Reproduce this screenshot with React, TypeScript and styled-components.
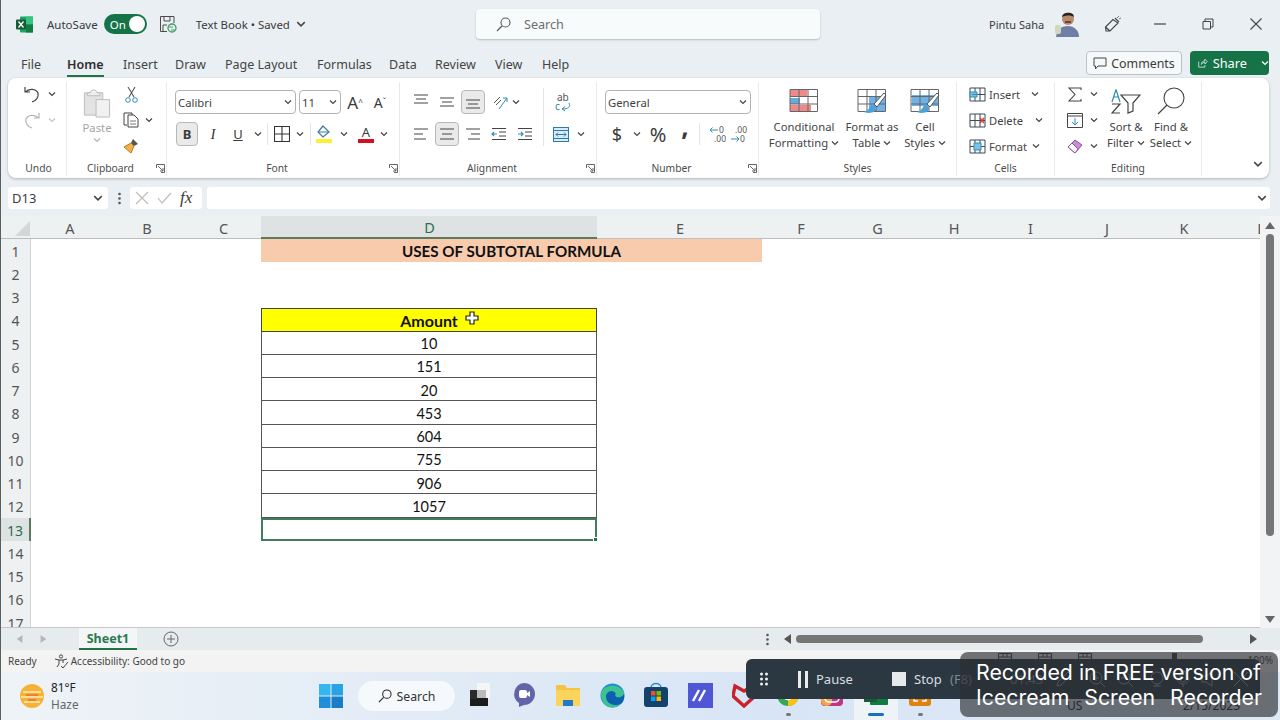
import React, { Fragment } from 'react'
import styled, { createGlobalStyle } from 'styled-components'

const UI = '"Noto Sans", "Open Sans", sans-serif'
const GREEN = '#217346'

const GlobalStyle = createGlobalStyle`
  html, body { margin: 0; padding: 0; background: #e9eff2; }
  body { font-family: ${UI}; color: #3b3b3b; }
  #root { width: 1280px; height: 720px; overflow: hidden; }
`

const Page = styled.div`
  position: relative;
  width: 1280px;
  height: 720px;
  overflow: hidden;
  display: flex;
  flex-direction: column;
  background: #e9eff2;
  border-left: 1px solid #5a5f62;
  box-sizing: border-box;
`

/* title bar */
const TitleBar = styled.header`
  height: 48px;
  flex: none;
  display: flex;
  align-items: center;
`
const TitleLeft = styled.div`
  width: 475px;
  flex: none;
  display: flex;
  align-items: center;
  padding-left: 15px;
  box-sizing: border-box;
`
const TitleText = styled.span<{ $ml?: number; $fs?: number }>`
  font-size: ${({ $fs }) => $fs ?? 11.5}px;
  color: #3a3a3a;
  margin-left: ${({ $ml }) => $ml ?? 0}px;
  white-space: nowrap;
`
const Toggle = styled.div`
  width: 43px;
  height: 20px;
  margin-left: 6px;
  border-radius: 10px;
  background: #157347;
  color: #fff;
  font-size: 11.5px;
  display: flex;
  align-items: center;
  justify-content: space-between;
  padding: 0 2px 0 6px;
  box-sizing: border-box;
`
const ToggleKnob = styled.i`
  width: 16px;
  height: 16px;
  border-radius: 50%;
  background: #fff;
`
const SearchBox = styled.div`
  width: 344px;
  height: 30px;
  flex: none;
  display: flex;
  align-items: center;
  gap: 13px;
  padding-left: 20px;
  box-sizing: border-box;
  background: #f8fbfc;
  border-radius: 4px;
  box-shadow: 0 1px 2px rgba(0, 0, 0, 0.22);
  font-size: 12.6px;
  color: #6d6d6d;
`
const TitleRight = styled.div`
  flex: 1;
  display: flex;
  align-items: center;
  padding-left: 169px;
`
const WinBtn = styled.div<{ $w: number }>`
  width: ${({ $w }) => $w}px;
  flex: none;
  display: flex;
  justify-content: center;
  align-items: center;
`

/* menu row */
const MenuRow = styled.nav`
  height: 30px;
  flex: none;
  display: flex;
  align-items: center;
  padding-left: 20px;
`
const Tab = styled.span<{ $active?: boolean; $w: number }>`
  position: relative;
  width: ${({ $w }) => $w}px;
  flex: none;
  padding-top: 2px;
  font-size: 12.5px;
  white-space: nowrap;
  color: ${({ $active }) => ($active ? '#2e2e2e' : '#444')};
  font-weight: ${({ $active }) => ($active ? 600 : 400)};
  &::after {
    content: '';
    display: ${({ $active }) => ($active ? 'block' : 'none')};
    position: absolute;
    left: 0;
    top: 21px;
    width: 37px;
    height: 2px;
    background: ${GREEN};
  }
`
const MenuRight = styled.div`
  margin-left: auto;
  display: flex;
  gap: 8px;
  padding-right: 11px;
`
const CommentsBtn = styled.div`
  width: 96px;
  height: 24px;
  display: flex;
  align-items: center;
  justify-content: center;
  gap: 4px;
  box-sizing: border-box;
  background: #f6f9fa;
  border: 1px solid #bcc2c5;
  border-radius: 4px;
  font-size: 12.4px;
`
const ShareBtn = styled.div`
  width: 79px;
  height: 24px;
  display: flex;
  align-items: center;
  gap: 5px;
  padding-left: 8px;
  box-sizing: border-box;
  background: #157347;
  border-radius: 4px;
  color: #fff;
  font-size: 12.8px;
`

/* ribbon */
const Ribbon = styled.section`
  height: 100px;
  flex: none;
  margin: 0 11px 0 7px;
  display: flex;
  background: #fff;
  border-radius: 8px;
  box-shadow: 0 1px 3px rgba(0, 0, 0, 0.25);
`
const Group = styled.div<{ $w: number }>`
  width: ${({ $w }) => $w}px;
  flex: none;
  margin: 4px 0 2px;
  display: flex;
  flex-direction: column;
  box-sizing: border-box;
  border-right: 1px solid #e7e9ea;
`
const GroupBody = styled.div<{ $pl?: number }>`
  flex: 1;
  display: flex;
  padding-left: ${({ $pl }) => $pl ?? 8}px;
  min-height: 0;
`
const GroupFoot = styled.div<{ $pl?: number }>`
  height: 16px;
  flex: none;
  display: flex;
  align-items: center;
  padding-left: ${({ $pl }) => $pl ?? 0}px;
`
const GroupLabel = styled.span`
  flex: 1;
  text-align: center;
  font-size: 10.3px;
  color: #4c4c4c;
`
const Launcher = styled.span`
  width: 12px;
  display: flex;
  justify-content: center;
`
const Stack = styled.div<{ $pt?: number; $gap?: number; $w?: number }>`
  display: flex;
  flex-direction: column;
  flex: none;
  padding-top: ${({ $pt }) => $pt ?? 0}px;
  gap: ${({ $gap }) => $gap ?? 2}px;
  ${({ $w }) => ($w ? `width: ${$w}px;` : '')}
`
const Row = styled.div`
  height: 24px;
  flex: none;
  display: flex;
  align-items: center;
`
const Btn = styled.div<{ $w: number; $active?: boolean }>`
  width: ${({ $w, $active }) => ($active ? $w - 2 : $w)}px;
  margin: 0 ${({ $active }) => ($active ? 1 : 0)}px;
  height: 24px;
  flex: none;
  display: flex;
  align-items: center;
  justify-content: center;
  box-sizing: border-box;
  border-radius: 4px;
  font-size: 13px;
  background: ${({ $active }) => ($active ? '#eaeaea' : 'transparent')};
  border: ${({ $active }) => ($active ? '1px solid #b8b8b8' : 'none')};
`
const GlyphBtn = styled(Btn)<{ $fs: number; $bold?: boolean; $pb?: number }>`
  font-size: ${({ $fs }) => $fs}px;
  font-weight: ${({ $bold }) => ($bold ? 700 : 400)};
  padding-bottom: ${({ $pb }) => $pb ?? 0}px;
`
const ItalicBtn = styled(Btn)`
  font-family: 'Liberation Serif', serif;
  font-style: italic;
  font-size: 15px;
`
const UnderBtn = styled(Btn)`
  text-decoration: underline;
`
const GrowFont = styled.sup`
  font-size: 8px;
  line-height: 8px;
`
const FontColorBtn = styled(Btn)`
  flex-direction: column;
  line-height: 13px;
`
const ColorBar = styled.i`
  display: block;
  width: 16px;
  height: 4px;
  background: #d3111c;
`
const VSep = styled.i<{ $ml?: number; $mr?: number; $h?: number; $mt?: number }>`
  width: 1px;
  height: ${({ $h }) => $h ?? 22}px;
  flex: none;
  margin: ${({ $mt }) => $mt ?? 0}px ${({ $mr }) => $mr ?? 0}px 0 ${({ $ml }) => $ml ?? 0}px;
  background: #e3e5e6;
`
const Select = styled.div<{ $w: number; $mr?: number }>`
  width: ${({ $w }) => $w}px;
  height: 24px;
  flex: none;
  margin-right: ${({ $mr }) => $mr ?? 0}px;
  display: flex;
  align-items: center;
  justify-content: space-between;
  padding: 0 3px 0 2px;
  box-sizing: border-box;
  background: #fff;
  border: 1px solid #b3b3b3;
  border-radius: 4px;
  font-size: 11.3px;
  color: #3f3f3f;
`
const BigBtn = styled.div<{ $w: number }>`
  width: ${({ $w }) => $w}px;
  flex: none;
  padding-top: 6px;
  display: flex;
  flex-direction: column;
  align-items: center;
`
const BigIcon = styled.div<{ $h?: number; $mb?: number }>`
  height: ${({ $h }) => $h ?? 26}px;
  margin-bottom: ${({ $mb }) => $mb ?? 5}px;
  display: flex;
  align-items: center;
  justify-content: center;
`
const BigLine = styled.span<{ $muted?: boolean }>`
  height: 16px;
  line-height: 16px;
  font-size: 11.3px;
  white-space: nowrap;
  color: ${({ $muted }) => ($muted ? '#a5a5a5' : '#444')};
  display: flex;
  align-items: center;
  gap: 3px;
`
const CellAction = styled.div`
  height: 24px;
  display: flex;
  align-items: center;
  font-size: 11.2px;
  color: #444;
  white-space: nowrap;
`
const ActionLabel = styled.span<{ $w: number }>`
  width: ${({ $w }) => $w}px;
  margin-left: 3px;
`
const Collapse = styled.div`
  flex: 1;
  display: flex;
  align-items: flex-end;
  justify-content: flex-end;
  padding: 0 6px 9px 0;
`

/* formula bar */
const FormulaBar = styled.div`
  height: 22px;
  flex: none;
  margin: 9px 10px 0 7px;
  display: flex;
  align-items: center;
`
const NameBox = styled.div`
  width: 100px;
  height: 22px;
  flex: none;
  display: flex;
  align-items: center;
  justify-content: space-between;
  padding: 0 5px 0 4px;
  box-sizing: border-box;
  background: #fff;
  border-radius: 3px;
  font-size: 13px;
`
const BarDots = styled.div`
  width: 22px;
  display: flex;
  justify-content: center;
`
const FxBox = styled.div`
  width: 72px;
  height: 22px;
  flex: none;
  display: flex;
  align-items: center;
  gap: 8px;
  padding-left: 5px;
  box-sizing: border-box;
  background: #fff;
  border-radius: 3px;
`
const FxText = styled.span`
  font-family: 'Liberation Serif', serif;
  font-style: italic;
  font-size: 17px;
  color: #3a3a3a;
`
const FormulaInput = styled.div`
  flex: 1;
  height: 22px;
  margin-left: 5px;
  display: flex;
  align-items: center;
  justify-content: flex-end;
  padding-right: 3px;
  background: #fff;
  border-radius: 3px;
`

/* sheet */
const Main = styled.main`
  height: 412px;
  margin-top: 7px;
  flex: none;
  display: flex;
`
const GridPane = styled.div`
  width: 1259px;
  flex: none;
  overflow: hidden;
  background: #fff;
  border-bottom: 1px solid #c6c6c6;
  box-sizing: border-box;
`
const SheetGrid = styled.div`
  display: grid;
  grid-template-columns: 30px 77px 77px 76px 336px 165px 77px 76px 77px 76px 77px 77px 77px;
  grid-template-rows: 22.5px repeat(17, 23.25px);
`
const Corner = styled.div`
  background: #eef1f2;
  border-bottom: 1px solid #bdbdbd;
  display: flex;
  align-items: flex-end;
  justify-content: flex-end;
  padding: 0 1px 2px 0;
  box-sizing: border-box;
`
const ColHead = styled.div<{ $selected?: boolean }>`
  display: flex;
  align-items: center;
  justify-content: center;
  padding: 2px 0 0 1px;
  font-size: 14.5px;
  box-sizing: border-box;
  color: ${({ $selected }) => ($selected ? '#2c6e4c' : '#555')};
  background: ${({ $selected }) => ($selected ? '#dfe2e2' : '#eef1f2')};
  border-bottom: ${({ $selected }) => ($selected ? `2px solid #5d7a5f` : '1px solid #bdbdbd')};
`
const RowHead = styled.div<{ $selected?: boolean }>`
  display: flex;
  align-items: center;
  justify-content: center;
  padding-top: 2px;
  font-size: 14px;
  box-sizing: border-box;
  color: ${({ $selected }) => ($selected ? '#2c6e4c' : '#555')};
  background: ${({ $selected }) => ($selected ? '#dfe2e2' : '#eef1f2')};
  border-right: ${({ $selected }) => ($selected ? `2px solid #5d7a5f` : '1px solid #d0d3d4')};
`
const Blank = styled.div``
const SheetCell = styled.div<{ $kind: 'title' | 'head' | 'value' | 'active' }>`
  position: relative;
  display: flex;
  align-items: center;
  justify-content: center;
  padding-top: 2px;
  box-sizing: border-box;
  font-family: Lato, 'Liberation Sans', sans-serif;
  font-size: ${({ $kind }) => ($kind === 'title' ? 15.2 : $kind === 'head' ? 16 : 14.5)}px;
  color: #111;
  font-weight: ${({ $kind }) => ($kind === 'title' || $kind === 'head' ? 700 : 400)};
  grid-column: ${({ $kind }) => ($kind === 'title' ? 'span 2' : 'auto')};
  background: ${({ $kind }) =>
    $kind === 'title' ? '#f8cbad' : $kind === 'head' ? '#ffff00' : '#fff'};
  ${({ $kind }) => ($kind === 'head' ? 'border: 1px solid #444;' : '')}
  ${({ $kind }) =>
    $kind === 'value' ? 'border: 1px solid #555; border-top: none;' : ''}
  ${({ $kind }) => ($kind === 'active' ? `border: 2px solid #3f7d5e;` : '')}
  ${({ $kind }) =>
    $kind === 'active'
      ? `&::after { content: ''; position: absolute; right: -3px; bottom: -3px; width: 5px; height: 5px; background: #217346; border: 1px solid #fff; box-sizing: border-box; }`
      : ''}
`
const Cursor = styled.svg`
  position: absolute;
  left: calc(50% + 35px);
  top: 1px;
`
const VScroll = styled.div`
  flex: 1;
  display: flex;
  flex-direction: column;
  align-items: center;
  padding: 5px 0 4px;
  box-sizing: border-box;
  background: #f1f3f4;
`
const VThumb = styled.div`
  width: 8px;
  height: 302px;
  margin-top: 3px;
  border-radius: 4px;
  background: #767676;
`
const VGap = styled.span`
  flex: 1;
`

/* sheet tabs */
const SheetBar = styled.div`
  height: 22px;
  flex: none;
  display: flex;
  align-items: center;
  background: #e6ebed;
`
const SheetNav = styled.div`
  width: 78px;
  display: flex;
  gap: 15px;
  padding-left: 15px;
  box-sizing: border-box;
`
const SheetTab = styled.div`
  width: 58px;
  height: 22px;
  display: flex;
  align-items: center;
  justify-content: center;
  box-sizing: border-box;
  background: #f3f5f6;
  border-bottom: 2px solid ${GREEN};
  font-size: 12.5px;
  font-weight: 700;
  color: #2b7a50;
`
const AddSheet = styled.div`
  width: 68px;
  display: flex;
  justify-content: center;
`
const HScrollArea = styled.div`
  margin-left: auto;
  width: 514px;
  display: flex;
  align-items: center;
  gap: 0;
  padding-right: 22px;
  box-sizing: border-box;
`
const HGap = styled.span`
  width: 14px;
`
const HTrack = styled.div`
  flex: 1;
  height: 8px;
  margin: 0 8px 0 3px;
  display: flex;
`
const HThumb = styled.div`
  width: 407px;
  border-radius: 4px;
  background: #767676;
`

/* status bar */
const StatusBar = styled.div`
  height: 22px;
  flex: none;
  display: flex;
  align-items: center;
  padding-left: 7px;
  background: #f3f3f3;
  font-size: 10px;
  color: #444;
`
const StatusA11y = styled.span`
  margin-left: 17px;
  display: flex;
  align-items: center;
  gap: 2px;
`
const StatusViews = styled.div`
  margin-left: auto;
  display: flex;
  align-items: flex-start;
  height: 22px;
  gap: 26px;
  padding: 3px 7px 0 0;
  box-sizing: border-box;
`
const ZoomSlider = styled.span`
  width: 104px;
  padding-left: 54px;
  box-sizing: border-box;
`
const SliderKnob = styled.i`
  display: block;
  width: 5px;
  height: 9px;
  background: #444;
`

/* taskbar */
const Taskbar = styled.footer`
  flex: 1;
  display: flex;
  align-items: center;
  background: linear-gradient(90deg, #eef3f7 0%, #e3ecf6 30%, #d8e5f6 60%, #dfe9f3 100%);
`
const Weather = styled.div`
  width: 318px;
  flex: none;
  display: flex;
  align-items: center;
  gap: 7px;
  padding-left: 19px;
  box-sizing: border-box;
`
const WeatherText = styled.div`
  display: flex;
  flex-direction: column;
  font-size: 11.8px;
  line-height: 17px;
  color: #222;
  span:last-child { color: #666; }
`
const StartIcon = styled.div`
  width: 24px;
  height: 24px;
  flex: none;
  margin-right: 15px;
`
const TaskSearch = styled.div`
  width: 97px;
  height: 30px;
  flex: none;
  margin-right: 3px;
  display: flex;
  align-items: center;
  justify-content: center;
  gap: 5px;
  background: #f6f9fc;
  border-radius: 15px;
  font-size: 12.3px;
  color: #333;
`
const TaskSlot = styled.div<{ $state?: 'open' | 'active' }>`
  position: relative;
  width: 44px;
  height: 48px;
  flex: none;
  display: flex;
  align-items: center;
  justify-content: center;
  box-sizing: border-box;
  padding-bottom: 2px;
  background: ${({ $state }) => ($state === 'active' ? '#eef3f8' : 'transparent')};
  &::after {
    content: '';
    display: ${({ $state }) => ($state ? 'block' : 'none')};
    position: absolute;
    bottom: 4px;
    left: 50%;
    width: ${({ $state }) => ($state === 'active' ? 16 : 5)}px;
    height: 3px;
    margin-left: ${({ $state }) => ($state === 'active' ? -8 : -2.5)}px;
    border-radius: 2px;
    background: ${({ $state }) => ($state === 'active' ? '#1a6fc4' : '#777')};
  }
`
const Tray = styled.div`
  margin-left: auto;
  width: 213px;
  display: flex;
  justify-content: space-between;
  align-items: flex-end;
  height: 48px;
  padding: 0 40px 6px 0;
  box-sizing: border-box;
  font-size: 12px;
  color: #222;
`

/* recorder overlays */
const RecorderBar = styled.div`
  position: absolute;
  left: 745px;
  top: 659px;
  width: 514px;
  height: 40px;
  display: flex;
  align-items: center;
  padding-left: 14px;
  box-sizing: border-box;
  border-radius: 6px;
  background: #2b3842;
  color: #d9dee2;
  font-size: 13px;
`
const RecorderItem = styled.span<{ $w: number; $dim?: boolean }>`
  width: ${({ $w }) => $w}px;
  flex: none;
  display: flex;
  align-items: center;
  gap: 8px;
  white-space: nowrap;
  color: ${({ $dim }) => ($dim ? '#7e8b94' : '#d9dee2')};
`
const Watermark = styled.div`
  position: absolute;
  left: 959px;
  top: 652px;
  width: 318px;
  height: 65px;
  padding: 8px 16px 0 16px;
  box-sizing: border-box;
  border-radius: 8px;
  background: rgba(42, 46, 50, 0.66);
  color: #fff;
  font-family: Inter, 'Noto Sans', sans-serif;
  font-size: 21.3px;
  line-height: 25px;
  white-space: nowrap;
`
const WatermarkLine = styled.div`
  display: flex;
  justify-content: space-between;
`

/* icons */
const Chev = ({ s = 8, c = '#444' }: { s?: number; c?: string }) => (
  <svg width={s} height={s} viewBox="0 0 8 8" style={{ flex: 'none' }}>
    <path d="M1 2.5 4 5.5 7 2.5" fill="none" stroke={c} strokeWidth="1.2" />
  </svg>
)
const LauncherIcon = () => (
  <svg width="9" height="9" viewBox="0 0 9 9">
    <path d="M.5 4V.5H8.5V8.5H5M2 2 7 7M4 7H7V4" fill="none" stroke="#666" />
  </svg>
)
const Lines = ({ a, b, c }: { a: number[]; b: number[]; c: number[] }) => (
  <svg width="16" height="14" viewBox="0 0 16 14">
    <path
      d={`M${a[0]} 2H${a[1]}M${b[0]} 7H${b[1]}M${c[0]} 12H${c[1]}`}
      stroke="#444"
      strokeWidth="1.1"
    />
  </svg>
)
const VAlign = ({ y }: { y: number }) => (
  <svg width="16" height="16" viewBox="0 0 16 16">
    <path d={`M1 ${y}H15M3 ${y + 4}H13M1 ${y + 8}H15`} stroke="#444" strokeWidth="1.1" />
  </svg>
)
const Indent = ({ flip }: { flip?: boolean }) => (
  <svg width="16" height="14" viewBox="0 0 16 14">
    <path d="M1 1.5H15M8 5H15M8 9H15M1 12.5H15" stroke="#444" strokeWidth="1.1" />
    <path
      d={flip ? 'M1 7H6M4 5 6 7 4 9' : 'M6 7H1M3 5 1 7 3 9'}
      stroke="#2f8fb0"
      strokeWidth="1.1"
      fill="none"
    />
  </svg>
)
const GridIcon = ({ kind }: { kind: 'cond' | 'table' | 'style' }) => (
  <svg width="30" height="26" viewBox="0 0 30 26">
    {kind === 'cond' && (
      <>
        <rect x="1" y="2" width="17" height="7" fill="#f08a8a" />
        <rect x="1" y="10" width="10" height="6" fill="#6aa9dc" />
        <rect x="1" y="17" width="21" height="6" fill="#f08a8a" />
      </>
    )}
    {kind === 'table' && <path d="M12 9H28V23H12Z" fill="#6fb2ea" />}
    {kind === 'style' && <path d="M2 7H28V18H2Z" fill="#6fb2ea" />}
    <path
      d="M1 1.5H28.5V23.5H1ZM1 8.5H28.5M1 16H28.5M10 1.5V23.5M19 1.5V23.5"
      fill="none"
      stroke="#666"
      strokeWidth="1"
    />
    {kind !== 'cond' && (
      <>
        <path d="M27 5 29 7 20 19 17 16Z" fill="#fff" stroke="#555" />
        <path d="M16 16C12 17 14 22 7 24 12 26 20 25 19 19Z" fill="#4da3d9" />
      </>
    )}
  </svg>
)
const CellIcon = ({ kind }: { kind: 'insert' | 'delete' | 'format' }) => (
  <svg width="17" height="17" viewBox="0 0 17 17">
    <path d="M1 2H16V15H1ZM6 2V15M11 2V15M1 8.5H16" fill="none" stroke="#3b4a55" />
    {kind === 'insert' && <path d="M1 6H8V11H1Z M9 8.5H3" fill="#7fc0ea" stroke="#2f8fb0" />}
    {kind === 'delete' && <path d="M11 6 15 11M15 6 11 11" stroke="#d9423a" strokeWidth="1.5" />}
    {kind === 'format' && <path d="M5 5H12V12H5Z" fill="#7fc0ea" stroke="#2f8fb0" />}
  </svg>
)
const ExcelLogo = () => (
  <svg width="17" height="17" viewBox="0 0 17 17">
    <rect x="4" y="0.5" width="13" height="16" rx="1" fill="#21a366" />
    <rect x="10" y="0.5" width="7" height="8" fill="#33c481" />
    <rect x="10" y="8.5" width="7" height="8" fill="#107c41" />
    <rect x="0" y="3.5" width="10" height="10" rx="1" fill="#185c37" />
    <path d="M2.5 5.5 7.5 11.5M7.5 5.5 2.5 11.5" stroke="#fff" strokeWidth="1.3" />
  </svg>
)
const SaveIcon = () => (
  <svg width="18" height="18" viewBox="0 0 18 18">
    <path d="M1.5 1.5H15V8M8 16.5H1.5V1.5M5 1.5V6H11V1.5M4 16V10H8" fill="none" stroke="#4a4a4a" />
    <circle cx="13" cy="13" r="4" fill="none" stroke="#3f9a63" strokeWidth="1.3" />
    <path d="M10 12H14M12 15H16" stroke="#3f9a63" />
  </svg>
)
const SearchIcon = ({ s = 15, c = '#5a5a5a' }: { s?: number; c?: string }) => (
  <svg width={s} height={s} viewBox="0 0 15 15">
    <circle cx="9.5" cy="5.5" r="4.5" fill="none" stroke={c} strokeWidth="1.1" />
    <path d="M6 9 1 14" stroke={c} strokeWidth="1.2" />
  </svg>
)
const Avatar = () => (
  <svg width="26" height="28" viewBox="0 0 26 28">
    <path d="M2 27C3 19 8 16 14 16S25 20 25 27Z" fill="#6f7ea6" />
    <circle cx="14" cy="9" r="6" fill="#b98a6c" />
    <path d="M8 7C8 2 20 1 20 7 17 5 12 5 8 7Z" fill="#2b2320" />
    <path d="M11 12H17" stroke="#3c2c26" strokeWidth="1.4" />
    <rect x="1" y="15" width="6" height="9" rx="2" fill="#cfd8b8" />
  </svg>
)
const PenIcon = () => (
  <svg width="18" height="18" viewBox="0 0 18 18">
    <path
      d="M2 16 1.5 12 9 4.5 14 8 6 16ZM1.5 12 6 16M11 3 15 7"
      fill="none"
      stroke="#444"
      strokeWidth="1.1"
    />
    <path d="M13 3 15 1M15 4 17 3" stroke="#777" />
  </svg>
)
const Fill = () => (
  <svg width="18" height="20" viewBox="0 0 18 20">
    <path d="M8 2 14 8 8 13 3 8Z" fill="none" stroke="#3a7a9e" strokeWidth="1.2" />
    <path d="M3 8H13" stroke="#3a7a9e" />
    <rect x="1" y="15" width="16" height="4" fill="#ffee33" />
  </svg>
)
const WrapText = () => (
  <svg width="18" height="19" viewBox="0 0 18 19">
    <text x="3" y="8" fontSize="10" fontFamily="Noto Sans" fill="#555">ab</text>
    <text x="1" y="17" fontSize="10" fontFamily="Noto Sans" fill="#2f7ba5">c</text>
    <path d="M15 10C17 14 14 16 8 16M11 13.5 8 16 11 18" fill="none" stroke="#2f8fb0" />
  </svg>
)
const DecimalIcon = ({ more }: { more?: boolean }) => (
  <svg width="20" height="19" viewBox="0 0 20 19" fontFamily="Noto Sans" fontSize="8.5" fill="#555">
    {more ? (
      <>
        <path d="M9 5H1M3.5 2.5 1 5 3.5 7.5" fill="none" stroke="#2f8fb0" />
        <text x="10" y="8">0</text>
        <text x="5" y="17">.00</text>
      </>
    ) : (
      <>
        <text x="5" y="8">.00</text>
        <path d="M1 14H9M6.5 11.5 9 14 6.5 16.5" fill="none" stroke="#2f8fb0" />
        <text x="10" y="17">0</text>
      </>
    )}
  </svg>
)
const Dots = ({ c = '#555' }: { c?: string }) => (
  <svg width="3" height="13" viewBox="0 0 3 13">
    <circle cx="1.5" cy="2" r="1.3" fill={c} />
    <circle cx="1.5" cy="6.5" r="1.3" fill={c} />
    <circle cx="1.5" cy="11" r="1.3" fill={c} />
  </svg>
)
const Tri = ({ dir, c = '#666', s = 10 }: { dir: 'u' | 'd' | 'l' | 'r'; c?: string; s?: number }) => {
  const d = { u: 'M5 1 10 8H0Z', d: 'M0 2H10L5 9Z', l: 'M8 0V10L1 5Z', r: 'M2 0V10L9 5Z' }[dir]
  return (
    <svg width={s} height={s} viewBox="0 0 10 10" style={{ flex: 'none' }}>
      <path d={d} fill={c} />
    </svg>
  )
}
const ViewIcon = () => (
  <svg width="14" height="11" viewBox="0 0 14 11">
    <path d="M.5.5H13.5V10.5H.5ZM.5 4H13.5M5 .5V4M9 .5V4" fill="none" stroke="#444" />
  </svg>
)

const COLS = ['A', 'B', 'C', 'D', 'E', 'F', 'G', 'H', 'I', 'J', 'K', 'L']
const VALUES: Record<number, string> = {
  5: '10',
  6: '151',
  7: '20',
  8: '453',
  9: '604',
  10: '755',
  11: '906',
  12: '1057',
}
const ROWS = Array.from({ length: 17 }, (_, i) => i + 1)

function SheetRow({ row }: { row: number }) {
  const cols = row === 1 ? COLS.filter((c) => c !== 'E') : COLS
  return (
    <>
      <RowHead $selected={row === 13}>{row}</RowHead>
      {cols.map((col) => {
        if (col !== 'D') return <Blank key={col} />
        if (row === 1) return <SheetCell key={col} $kind="title">USES OF SUBTOTAL FORMULA</SheetCell>
        if (row === 4)
          return (
            <SheetCell key={col} $kind="head">
              Amount
              <Cursor width="16" height="16" viewBox="0 0 16 16">
                <path
                  d="M6 2H10V6H14V10H10V14H6V10H2V6H6Z"
                  fill="#fff"
                  stroke="#222"
                  strokeWidth="1.2"
                />
              </Cursor>
            </SheetCell>
          )
        if (VALUES[row]) return <SheetCell key={col} $kind="value">{VALUES[row]}</SheetCell>
        if (row === 13) return <SheetCell key={col} $kind="active" />
        return <Blank key={col} />
      })}
    </>
  )
}

export default function App() {
  return (
    <Page>
      <GlobalStyle />
      <TitleBar>
        <TitleLeft>
          <ExcelLogo />
          <TitleText $ml={14}>AutoSave</TitleText>
          <Toggle>
            On
            <ToggleKnob />
          </Toggle>
          <WinBtn $w={12} />
          <SaveIcon />
          <TitleText $ml={19} $fs={11.4}>Text Book • Saved</TitleText>
          <WinBtn $w={6} />
          <Chev s={10} />
        </TitleLeft>
        <SearchBox>
          <SearchIcon />
          Search
        </SearchBox>
        <TitleRight>
          <TitleText $fs={11}>Pintu Saha</TitleText>
          <WinBtn $w={46}>
            <Avatar />
          </WinBtn>
          <WinBtn $w={46}>
            <PenIcon />
          </WinBtn>
          <WinBtn $w={48}>
            <svg width="14" height="2" viewBox="0 0 14 2">
              <path d="M1 1H13" stroke="#444" strokeWidth="1.2" />
            </svg>
          </WinBtn>
          <WinBtn $w={48}>
            <svg width="12" height="12" viewBox="0 0 12 12">
              <path d="M1 3.5H8.5V11H1ZM3 3.5V1H11V9H8.5" fill="none" stroke="#444" />
            </svg>
          </WinBtn>
          <WinBtn $w={48}>
            <svg width="12" height="12" viewBox="0 0 12 12">
              <path d="M.5.5 11.5 11.5M11.5.5.5 11.5" stroke="#444" strokeWidth="1.1" />
            </svg>
          </WinBtn>
        </TitleRight>
      </TitleBar>

      <MenuRow>
        <Tab $w={46}>File</Tab>
        <Tab $w={56} $active>Home</Tab>
        <Tab $w={52}>Insert</Tab>
        <Tab $w={50}>Draw</Tab>
        <Tab $w={92}>Page Layout</Tab>
        <Tab $w={72}>Formulas</Tab>
        <Tab $w={46}>Data</Tab>
        <Tab $w={60}>Review</Tab>
        <Tab $w={47}>View</Tab>
        <Tab $w={40}>Help</Tab>
        <MenuRight>
          <CommentsBtn>
            <svg width="14" height="13" viewBox="0 0 14 13">
              <path d="M1 1H13V9H5L2.5 12V9H1Z" fill="none" stroke="#444" />
            </svg>
            Comments
          </CommentsBtn>
          <ShareBtn>
            <svg width="14" height="14" viewBox="0 0 14 14">
              <path
                d="M1 5V13H10V10M5 9C5 5 8 4 10 4V1.5L13.5 5 10 8.5V6C8 6 6 7 5 9Z"
                fill="none"
                stroke="#fff"
              />
            </svg>
            Share
            <WinBtn $w={4} />
            <Chev c="#fff" />
          </ShareBtn>
        </MenuRight>
      </MenuRow>

      <Ribbon>
        <Group $w={59}>
          <GroupBody $pl={8}>
            <Stack>
              <Row>
                <Btn $w={32}>
                  <svg width="16" height="17" viewBox="0 0 16 17">
                    <path
                      d="M1 1V6H6M1.5 6C5 2 12 2.5 14 7 15 11 12 15 8 16"
                      fill="none"
                      stroke="#444"
                      strokeWidth="1.2"
                    />
                  </svg>
                </Btn>
                <Btn $w={8}>
                  <Chev />
                </Btn>
              </Row>
              <Row>
                <Btn $w={32}>
                  <svg width="16" height="17" viewBox="0 0 16 17">
                    <path
                      d="M15 1V6H10M14.5 6C11 2 4 2.5 2 7 1 11 4 15 8 16"
                      fill="none"
                      stroke="#b5b5b5"
                      strokeWidth="1.2"
                    />
                  </svg>
                </Btn>
                <Btn $w={8}>
                  <Chev c="#c5c5c5" />
                </Btn>
              </Row>
            </Stack>
          </GroupBody>
          <GroupFoot $pl={3}>
            <GroupLabel>Undo</GroupLabel>
          </GroupFoot>
        </Group>

        <Group $w={100}>
          <GroupBody $pl={4}>
            <BigBtn $w={52}>
              <BigIcon $h={30} $mb={2}>
                <svg width="28" height="30" viewBox="0 0 28 31">
                  <path d="M1 5H20V28H1Z" fill="#e3e3e3" stroke="#bbb" />
                  <path d="M7 5C7 1 14 1 14 5H17V8H4V5Z" fill="#eee" stroke="#bbb" />
                  <path d="M13 12H27V30H13Z" fill="#f1f1f1" stroke="#bbb" />
                </svg>
              </BigIcon>
              <BigLine $muted>Paste</BigLine>
              <Chev c="#b5b5b5" />
            </BigBtn>
            <Stack>
              <Row>
                <Btn $w={16}>
                  <svg width="13" height="17" viewBox="0 0 13 17">
                    <path d="M3 1 9 11M10 1 4 11" stroke="#555" strokeWidth="1.1" />
                    <circle cx="3" cy="14" r="2.3" fill="none" stroke="#2f8fb0" />
                    <circle cx="10" cy="14" r="2.3" fill="none" stroke="#2f8fb0" />
                  </svg>
                </Btn>
              </Row>
              <Row>
                <Btn $w={16}>
                  <svg width="16" height="16" viewBox="0 0 16 16">
                    <path d="M4 13H1V1H9V3M5 3H11L15 7V15H5Z" fill="none" stroke="#444" />
                    <path d="M7 9H13M7 12H13" stroke="#777" />
                  </svg>
                </Btn>
                <Btn $w={20}>
                  <Chev />
                </Btn>
              </Row>
              <Row>
                <Btn $w={16}>
                  <svg width="16" height="16" viewBox="0 0 16 16">
                    <path d="M10 1 15 6 11 8 8 5Z" fill="#555" />
                    <path d="M8 5 11 8 8 15 1 9Z" fill="#f2b24b" stroke="#b57a1e" />
                  </svg>
                </Btn>
              </Row>
            </Stack>
          </GroupBody>
          <GroupFoot>
            <GroupLabel>Clipboard</GroupLabel>
            <Launcher>
              <LauncherIcon />
            </Launcher>
          </GroupFoot>
        </Group>

        <Group $w={233}>
          <GroupBody>
            <Stack $pt={8} $gap={8}>
              <Row>
                <Select $w={121} $mr={3}>
                  Calibri
                  <Chev />
                </Select>
                <Select $w={42} $mr={0}>
                  11
                  <Chev />
                </Select>
                <GlyphBtn $w={28} $fs={17}>
                  A<GrowFont>^</GrowFont>
                </GlyphBtn>
                <GlyphBtn $w={22} $fs={14}>
                  A<GrowFont>ˇ</GrowFont>
                </GlyphBtn>
              </Row>
              <Row>
                <GlyphBtn $w={24} $active $fs={13} $bold>B</GlyphBtn>
                <ItalicBtn $w={28}>I</ItalicBtn>
                <UnderBtn $w={22}>U</UnderBtn>
                <Btn $w={18}><Chev /></Btn>
                <VSep />
                <Btn $w={27}>
                  <svg width="16" height="16" viewBox="0 0 16 16">
                    <path d="M.5.5H15.5V15.5H.5ZM8 .5V15.5M.5 8H15.5" fill="none" stroke="#333" strokeWidth="1.1" />
                  </svg>
                </Btn>
                <Btn $w={10}><Chev /></Btn>
                <VSep $ml={5} />
                <Btn $w={26}><Fill /></Btn>
                <Btn $w={14}><Chev /></Btn>
                <FontColorBtn $w={30}>
                  A
                  <ColorBar />
                </FontColorBtn>
                <Btn $w={6}><Chev /></Btn>
              </Row>
            </Stack>
          </GroupBody>
          <GroupFoot>
            <GroupLabel>Font</GroupLabel>
            <Launcher>
              <LauncherIcon />
            </Launcher>
          </GroupFoot>
        </Group>

        <Group $w={197}>
          <GroupBody>
            <Stack $pt={8} $gap={8} $w={135}>
              <Row>
                <Btn $w={26}><VAlign y={1} /></Btn>
                <Btn $w={26}><VAlign y={4} /></Btn>
                <Btn $w={26} $active><VAlign y={6} /></Btn>
                <Btn $w={28}>
                  <svg width="17" height="17" viewBox="0 0 17 17">
                    <path d="M2 9 8 3M4 11 9 6" fill="none" stroke="#555" />
                    <path d="M7 15 15 4M11 4H15V8" fill="none" stroke="#2f8fb0" />
                  </svg>
                </Btn>
                <Btn $w={4}><Chev /></Btn>
              </Row>
              <Row>
                <Btn $w={26}><Lines a={[1, 15]} b={[1, 10]} c={[1, 13]} /></Btn>
                <Btn $w={26} $active><Lines a={[1, 15]} b={[3, 13]} c={[1, 15]} /></Btn>
                <Btn $w={26}><Lines a={[1, 15]} b={[6, 15]} c={[3, 15]} /></Btn>
                <Btn $w={26}><Indent /></Btn>
                <Btn $w={26}><Indent flip /></Btn>
              </Row>
            </Stack>
            <VSep $h={58} $mt={6} />
            <Stack $pt={8} $gap={8}>
              <Row>
                <Btn $w={38}>
                  <WrapText />
                </Btn>
              </Row>
              <Row>
                <Btn $w={34}>
                  <svg width="16" height="15" viewBox="0 0 16 15">
                    <rect x=".5" y=".5" width="15" height="14" fill="#d7ecf8" stroke="#2f7ba5" />
                    <path d="M.5 3.5H15.5M.5 11.5H15.5M3 7.5H13M5 5.5 3 7.5 5 9.5M11 5.5 13 7.5 11 9.5" fill="none" stroke="#2f7ba5" />
                  </svg>
                </Btn>
                <Btn $w={6}><Chev /></Btn>
              </Row>
            </Stack>
          </GroupBody>
          <GroupFoot>
            <GroupLabel>Alignment</GroupLabel>
            <Launcher>
              <LauncherIcon />
            </Launcher>
          </GroupFoot>
        </Group>

        <Group $w={162}>
          <GroupBody>
            <Stack $pt={8} $gap={8}>
              <Row>
                <Select $w={146}>
                  General
                  <Chev />
                </Select>
              </Row>
              <Row>
                <GlyphBtn $w={24} $fs={18}>$</GlyphBtn>
                <Btn $w={16}><Chev /></Btn>
                <GlyphBtn $w={26} $fs={20}>%</GlyphBtn>
                <GlyphBtn $w={28} $fs={26} $bold $pb={16}>,</GlyphBtn>
                <VSep $mr={8} />
                <Btn $w={21}><DecimalIcon more /></Btn>
                <Btn $w={21}><DecimalIcon /></Btn>
              </Row>
            </Stack>
          </GroupBody>
          <GroupFoot>
            <GroupLabel>Number</GroupLabel>
            <Launcher>
              <LauncherIcon />
            </Launcher>
          </GroupFoot>
        </Group>

        <Group $w={198}>
          <GroupBody $pl={5}>
            <BigBtn $w={80}>
              <BigIcon><GridIcon kind="cond" /></BigIcon>
              <BigLine>Conditional</BigLine>
              <BigLine>Formatting <Chev /></BigLine>
            </BigBtn>
            <BigBtn $w={56}>
              <BigIcon><GridIcon kind="table" /></BigIcon>
              <BigLine>Format as</BigLine>
              <BigLine>Table <Chev /></BigLine>
            </BigBtn>
            <BigBtn $w={50}>
              <BigIcon><GridIcon kind="style" /></BigIcon>
              <BigLine>Cell</BigLine>
              <BigLine>Styles <Chev /></BigLine>
            </BigBtn>
          </GroupBody>
          <GroupFoot>
            <GroupLabel>Styles</GroupLabel>
          </GroupFoot>
        </Group>

        <Group $w={98}>
          <GroupBody $pl={12}>
            <Stack>
              <CellAction>
                <CellIcon kind="insert" />
                <ActionLabel $w={42}>Insert</ActionLabel>
                <Chev />
              </CellAction>
              <CellAction>
                <CellIcon kind="delete" />
                <ActionLabel $w={46}>Delete</ActionLabel>
                <Chev />
              </CellAction>
              <CellAction>
                <CellIcon kind="format" />
                <ActionLabel $w={43}>Format</ActionLabel>
                <Chev />
              </CellAction>
            </Stack>
          </GroupBody>
          <GroupFoot>
            <GroupLabel>Cells</GroupLabel>
          </GroupFoot>
        </Group>

        <Group $w={147}>
          <GroupBody>
            <Stack>
              <Row>
                <Btn $w={24}>
                  <svg width="14" height="15" viewBox="0 0 14 15">
                    <path d="M13 3V1H1L7 7.5 1 14H13V12" fill="none" stroke="#444" strokeWidth="1.1" />
                  </svg>
                </Btn>
                <Btn $w={14}><Chev /></Btn>
              </Row>
              <Row>
                <Btn $w={24}>
                  <svg width="16" height="15" viewBox="0 0 16 15">
                    <path d="M.5.5H15.5V14.5H.5ZM.5 3H15.5" fill="none" stroke="#444" />
                    <path d="M8 5V12M5 9 8 12 11 9" fill="none" stroke="#2f8fb0" />
                  </svg>
                </Btn>
                <Btn $w={14}><Chev /></Btn>
              </Row>
              <Row>
                <Btn $w={24}>
                  <svg width="16" height="15" viewBox="0 0 16 15">
                    <path d="M1 8 8 1 15 6 8 14Z" fill="#c790d6" stroke="#92509f" />
                    <path d="M5 4 11 10 8 14 1 8Z" fill="#fff" stroke="#92509f" />
                  </svg>
                </Btn>
                <Btn $w={14}><Chev /></Btn>
              </Row>
            </Stack>
            <BigBtn $w={50}>
              <BigIcon>
                <svg width="30" height="27" viewBox="0 0 30 27">
                  <path d="M5 1.5 1 14M5 1.5 9 14M2.5 9H7.5" fill="none" stroke="#2f8fb0" strokeWidth="1.2" />
                  <path d="M1 16H9L1 25H9" fill="none" stroke="#444" strokeWidth="1.2" />
                  <path d="M10 7H29L22 15V23L17 25V15Z" fill="none" stroke="#444" strokeWidth="1.2" />
                </svg>
              </BigIcon>
              <BigLine>Sort &amp;</BigLine>
              <BigLine>Filter <Chev /></BigLine>
            </BigBtn>
            <BigBtn $w={40}>
              <BigIcon>
                <svg width="30" height="30" viewBox="0 0 30 30">
                  <circle cx="18" cy="12" r="10" fill="none" stroke="#444" strokeWidth="1.1" />
                  <path d="M11 19 2 28" stroke="#444" strokeWidth="1.2" />
                </svg>
              </BigIcon>
              <BigLine>Find &amp;</BigLine>
              <BigLine>Select <Chev /></BigLine>
            </BigBtn>
          </GroupBody>
          <GroupFoot>
            <GroupLabel>Editing</GroupLabel>
          </GroupFoot>
        </Group>

        <Collapse>
          <Chev s={10} />
        </Collapse>
      </Ribbon>

      <FormulaBar>
        <NameBox>
          D13
          <Chev s={10} />
        </NameBox>
        <BarDots>
          <Dots />
        </BarDots>
        <FxBox>
          <svg width="14" height="14" viewBox="0 0 14 14">
            <path d="M1 1 13 13M13 1 1 13" stroke="#bdbdbd" strokeWidth="1.2" />
          </svg>
          <svg width="15" height="12" viewBox="0 0 15 12">
            <path d="M1 6 5 11 14 1" fill="none" stroke="#bdbdbd" strokeWidth="1.2" />
          </svg>
          <FxText>fx</FxText>
        </FxBox>
        <FormulaInput>
          <Chev s={10} />
        </FormulaInput>
      </FormulaBar>

      <Main>
        <GridPane>
          <SheetGrid>
            <Corner>
              <svg width="15" height="15" viewBox="0 0 15 15">
                <path d="M15 0V15H0Z" fill="#d4d6d7" />
              </svg>
            </Corner>
            {COLS.map((col) => (
              <ColHead key={col} $selected={col === 'D'}>{col}</ColHead>
            ))}
            {ROWS.map((row) => (
              <Fragment key={row}>
                <SheetRow row={row} />
              </Fragment>
            ))}
          </SheetGrid>
        </GridPane>
        <VScroll>
          <Tri dir="u" />
          <VThumb />
          <VGap />
          <Tri dir="d" />
        </VScroll>
      </Main>

      <SheetBar>
        <SheetNav>
          <Tri dir="l" c="#b5b5b5" s={8} />
          <Tri dir="r" c="#b5b5b5" s={8} />
        </SheetNav>
        <SheetTab>Sheet1</SheetTab>
        <AddSheet>
          <svg width="16" height="16" viewBox="0 0 16 16">
            <circle cx="8" cy="8" r="7" fill="none" stroke="#666" />
            <path d="M8 4V12M4 8H12" stroke="#666" />
          </svg>
        </AddSheet>
        <HScrollArea>
          <Dots />
          <HGap />
          <Tri dir="l" c="#555" />
          <HTrack>
            <HThumb />
          </HTrack>
          <Tri dir="r" c="#555" />
        </HScrollArea>
      </SheetBar>

      <StatusBar>
        Ready
        <StatusA11y>
          <svg width="15" height="15" viewBox="0 0 15 15">
            <circle cx="7" cy="2.5" r="1.6" fill="none" stroke="#444" />
            <path d="M1 5 5 6H9L13 5M5 6 5 10 3 13M9 6V9" fill="none" stroke="#444" />
            <path d="M7 12 9 14 14 8" fill="none" stroke="#444" />
          </svg>
          Accessibility: Good to go
        </StatusA11y>
        <StatusViews>
          <ViewIcon />
          <ViewIcon />
          <ViewIcon />
          <ZoomSlider>
            <SliderKnob />
          </ZoomSlider>
          <span>100%</span>
        </StatusViews>
      </StatusBar>

      <Taskbar>
        <Weather>
          <svg width="24" height="26" viewBox="0 0 24 26">
            <circle cx="12" cy="13" r="12" fill="#f5b335" />
            <path d="M3 9H21M1 14H23M4 19H20" stroke="#fde9b8" strokeWidth="1.6" />
            <path d="M6 12H18M8 17H16" stroke="#e2703a" strokeWidth="1.6" />
          </svg>
          <WeatherText>
            <span>81°F</span>
            <span>Haze</span>
          </WeatherText>
        </Weather>
        <StartIcon>
          <svg width="24" height="24" viewBox="0 0 24 24">
            <rect width="11.5" height="11.5" fill="#33b7ee" />
            <rect x="12.5" width="11.5" height="11.5" fill="#2aa3e4" />
            <rect y="12.5" width="11.5" height="11.5" fill="#1f8fd8" />
            <rect x="12.5" y="12.5" width="11.5" height="11.5" fill="#1a7cc7" />
          </svg>
        </StartIcon>
        <TaskSearch>
          <SearchIcon s={14} c="#222" />
          Search
        </TaskSearch>
        <TaskSlot>
          <svg width="20" height="24" viewBox="0 0 20 24">
            <rect x="7" width="13" height="16" fill="#f5f5f5" />
            <rect x="0" y="7" width="16" height="9" fill="#bbb" />
            <rect x="0" y="15" width="18" height="8" fill="#1c1c1c" />
            <rect x="0" y="7" width="7" height="9" fill="#2a2a2a" />
          </svg>
        </TaskSlot>
        <TaskSlot>
          <svg width="24" height="26" viewBox="0 0 24 26">
            <path d="M12 1A11 11 0 0 1 12 23L7 25V21A11 11 0 0 1 12 1Z" fill="#6264a7" />
            <rect x="7" y="8" width="8" height="8" rx="2" fill="#fff" />
            <path d="M15 11 18 9V15L15 13Z" fill="#fff" />
          </svg>
        </TaskSlot>
        <TaskSlot>
          <svg width="26" height="24" viewBox="0 0 26 24">
            <path d="M1 2H10L12 5H25V22H1Z" fill="#f6c445" />
            <rect x="1" y="7" width="24" height="16" fill="#fbd45c" />
            <rect x="8" y="17" width="10" height="6" fill="#2079c9" />
          </svg>
        </TaskSlot>
        <TaskSlot>
          <svg width="25" height="25" viewBox="0 0 25 25">
            <circle cx="12.5" cy="12.5" r="12" fill="#1a8fd0" />
            <path d="M1 10C4 1 20 0 24 10 24 15 16 16 15 12 18 9 8 5 6 13 6 20 13 24 20 21 12 29 0 22 1 10Z" fill="#3ec28f" />
            <path d="M6 13C8 5 18 9 15 12 16 16 22 15 24 11 25 17 22 21 20 21 13 24 6 20 6 13Z" fill="#0d5fb0" />
          </svg>
        </TaskSlot>
        <TaskSlot>
          <svg width="24" height="26" viewBox="0 0 24 26">
            <path d="M7 6C7 0 17 0 17 6" fill="none" stroke="#2a93c9" strokeWidth="1.5" />
            <rect y="5" width="24" height="20" rx="3" fill="#14426e" />
            <rect x="7" y="9" width="4.5" height="4.5" fill="#f25022" />
            <rect x="12.5" y="9" width="4.5" height="4.5" fill="#7fba00" />
            <rect x="7" y="14.5" width="4.5" height="4.5" fill="#00a4ef" />
            <rect x="12.5" y="14.5" width="4.5" height="4.5" fill="#ffb900" />
          </svg>
        </TaskSlot>
        <TaskSlot>
          <svg width="25" height="25" viewBox="0 0 25 25">
            <rect width="25" height="25" fill="#4f57d6" />
            <path d="M5 18 11 7M11 18 17 7" stroke="#fff" strokeWidth="2.4" />
          </svg>
        </TaskSlot>
        <TaskSlot>
          <svg width="24" height="26" viewBox="0 0 24 26">
            <path d="M3 4 12 9 21 4 23 14 12 24 1 14Z" fill="none" stroke="#c8222b" strokeWidth="3.4" />
          </svg>
        </TaskSlot>
        <TaskSlot $state="open">
          <svg width="24" height="24" viewBox="0 0 24 24">
            <circle cx="12" cy="12" r="11" fill="#35a853" />
            <path d="M12 12 22 7A11 11 0 0 1 12 23Z" fill="#fbc116" />
            <circle cx="12" cy="12" r="4.5" fill="#4285f4" stroke="#fff" strokeWidth="1.5" />
          </svg>
        </TaskSlot>
        <TaskSlot>
          <svg width="24" height="24" viewBox="0 0 24 24">
            <rect x="1" y="1" width="22" height="22" rx="5" fill="#e25b5f" />
            <rect x="1" y="14" width="22" height="9" rx="4" fill="#c13584" />
            <rect x="1" y="1" width="11" height="22" rx="5" fill="#f2a64a" />
            <rect x="5" y="5" width="14" height="14" rx="4" fill="none" stroke="#fff" strokeWidth="1.6" />
          </svg>
        </TaskSlot>
        <TaskSlot $state="active">
          <svg width="24" height="22" viewBox="0 0 24 22">
            <rect x="6" y="1" width="18" height="20" rx="1" fill="#107c41" />
            <rect x="0" y="4" width="13" height="14" fill="#185c37" />
          </svg>
        </TaskSlot>
        <TaskSlot $state="open">
          <svg width="24" height="24" viewBox="0 0 24 24">
            <rect x="1" y="1" width="22" height="22" rx="3" fill="#de8211" />
            <path d="M6 9V6H10M18 9V6H14M6 15V18H10M18 15V18H14" fill="none" stroke="#fff" strokeWidth="1.3" />
          </svg>
        </TaskSlot>
        <Tray>
          <span>US</span>
          <span>2/15/2023</span>
        </Tray>
      </Taskbar>

      <RecorderBar>
        <RecorderItem $w={38}>
          <svg width="8" height="15" viewBox="0 0 8 15">
            {[1.5, 6.5].map((x) =>
              [2, 7, 12].map((y) => <circle key={`${x}-${y}`} cx={x} cy={y} r="1.5" fill="#eef1f3" />),
            )}
          </svg>
        </RecorderItem>
        <RecorderItem $w={94}>
          <svg width="10" height="17" viewBox="0 0 10 17">
            <path d="M1.5 0V17M8.5 0V17" stroke="#e9ecee" strokeWidth="3" />
          </svg>
          Pause
        </RecorderItem>
        <RecorderItem $w={58}>
          <svg width="14" height="14" viewBox="0 0 14 14">
            <rect width="14" height="14" fill="#e6e9eb" />
          </svg>
          Stop
        </RecorderItem>
        <RecorderItem $w={60} $dim>(F8)</RecorderItem>
        <RecorderItem $w={45} $dim>01:43</RecorderItem>
        <RecorderItem $w={33} $dim>
          <svg width="18" height="18" viewBox="0 0 18 18">
            <path d="M2 16 3 12 13 2 16 5 6 15Z" fill="none" stroke="#9aa3a8" />
          </svg>
        </RecorderItem>
        <RecorderItem $w={28} $dim>
          <svg width="18" height="18" viewBox="0 0 18 18">
            <circle cx="8" cy="8" r="6" fill="none" stroke="#9aa3a8" />
            <path d="M12.5 12.5 17 17M5 8H11M8 5V11" stroke="#9aa3a8" />
          </svg>
        </RecorderItem>
        <RecorderItem $w={32} $dim>
          <svg width="18" height="18" viewBox="0 0 18 18">
            <circle cx="8" cy="8" r="6" fill="none" stroke="#9aa3a8" />
            <path d="M12.5 12.5 17 17M5 8H11" stroke="#9aa3a8" />
          </svg>
        </RecorderItem>
        <RecorderItem $w={26} $dim>
          <svg width="18" height="18" viewBox="0 0 18 18">
            <circle cx="9" cy="8" r="6" fill="none" stroke="#9aa3a8" />
            <path d="M5 16H13M9 14V16" stroke="#9aa3a8" />
          </svg>
        </RecorderItem>
        <RecorderItem $w={26} $dim>
          <svg width="18" height="18" viewBox="0 0 18 18">
            <rect x="6" y="1" width="6" height="11" rx="3" fill="none" stroke="#9aa3a8" />
            <path d="M3 8C3 16 15 16 15 8M9 14V17" fill="none" stroke="#9aa3a8" />
          </svg>
        </RecorderItem>
        <RecorderItem $w={33} $dim>
          <svg width="18" height="18" viewBox="0 0 18 18">
            <path d="M2 6H6L12 2V16L6 12H2Z" fill="none" stroke="#9aa3a8" />
          </svg>
        </RecorderItem>
        <RecorderItem $w={16} $dim>
          <svg width="16" height="16" viewBox="0 0 16 16">
            <path d="M1 1 15 15M15 1 1 15" stroke="#9aa3a8" />
          </svg>
        </RecorderItem>
      </RecorderBar>

      <Watermark>
        <WatermarkLine>Recorded in FREE version of</WatermarkLine>
        <WatermarkLine>
          <span>Icecream</span>
          <span>Screen</span>
          <span>Recorder</span>
        </WatermarkLine>
      </Watermark>
    </Page>
  )
}
